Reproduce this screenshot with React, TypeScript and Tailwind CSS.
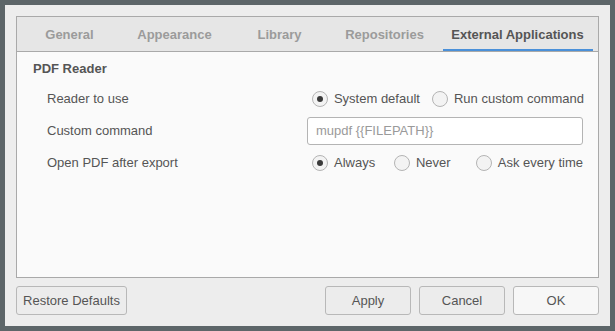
import React from 'react'

const tabs = ['General', 'Appearance', 'Library', 'Repositories']

const Radio = ({ checked, label, className = '' }: { checked?: boolean; label: string; className?: string }) => (
  <div className={`flex items-center whitespace-nowrap ${className}`}>
    <span className="w-[16px] h-[16px] shrink-0 rounded-full border border-[#b4b4b4] bg-[#f3f3f3] flex items-center justify-center">
      {checked && <span className="w-[6px] h-[6px] rounded-full bg-[#3a3a3a]" />}
    </span>
    <span className="ml-[6px] text-[13px] text-[#555]">{label}</span>
  </div>
)

const Btn = ({ children, className = '' }: { children: React.ReactNode; className?: string }) => (
  <button className={`h-[29px] rounded-[3px] border border-[#b8b8b8] bg-[#ececec] text-[13px] text-[#555] ${className}`}>
    {children}
  </button>
)

export default function App() {
  return (
    <div className="w-[615px] h-[331px] bg-[#5d6669] p-[5px] font-['Liberation_Sans',sans-serif]">
      <div className="h-full bg-[#ededed] flex flex-col pt-[11px] pl-[11px] pr-[11px] pb-[11px]">
        <div className="w-[583px] h-[262px] border border-[#a9a9a9] bg-[#fafafa] flex flex-col">
          <div className="h-[35px] bg-[#e6e6e6] border-b border-[#a9a9a9] flex">
            {tabs.map(t => (
              <div key={t} className="w-[105px] pt-[2px] flex items-center justify-center text-[13px] font-bold text-[#9b9b9b]">
                {t}
              </div>
            ))}
            <div className="flex-1 flex flex-col">
              <div className="flex-1 pt-[4px] flex items-center justify-center text-[13px] font-bold text-[#555]">
                External Applications
              </div>
              <div className="h-[2px] bg-[#4a90d9] mx-[6px] mr-[5px]" />
            </div>
          </div>
          <div className="pl-[16px] pt-[9px]">
            <div className="text-[13px] font-bold text-[#555] h-[16px] leading-[16px]">PDF Reader</div>
            <div className="pl-[14px] pr-[14px] mt-[6px] flex flex-col">
              <div className="h-[32px] flex items-center">
                <span className="text-[13px] text-[#555]">Reader to use</span>
                <div className="ml-auto flex items-center">
                  <Radio checked label="System default" />
                  <Radio label="Run custom command" className="ml-[12px]" />
                </div>
              </div>
              <div className="h-[32px] flex items-center">
                <span className="text-[13px] text-[#555]">Custom command</span>
                <div className="ml-auto mr-[1px] w-[276px] h-[28px] border border-[#b4b4b4] rounded-[3px] bg-white flex items-center pl-[8px] text-[13px] text-[#9a9a9a]">
                  mupdf {'{{FILEPATH}}'}
                </div>
              </div>
              <div className="h-[32px] flex items-center">
                <span className="text-[13px] text-[#555]">Open PDF after export</span>
                <div className="ml-auto mr-[1px] flex items-center w-[271px]">
                  <Radio checked label="Always" className="w-[82px]" />
                  <Radio label="Never" className="w-[82px]" />
                  <Radio label="Ask every time" />
                </div>
              </div>
            </div>
          </div>
        </div>
        <div className="mt-[8px] flex items-center">
          <Btn className="w-[111px]">Restore Defaults</Btn>
          <Btn className="w-[86px] ml-auto">Apply</Btn>
          <Btn className="w-[86px] ml-[8px]">Cancel</Btn>
          <Btn className="w-[86px] ml-[8px] bg-[#f7f7f7]">OK</Btn>
        </div>
      </div>
    </div>
  )
}
